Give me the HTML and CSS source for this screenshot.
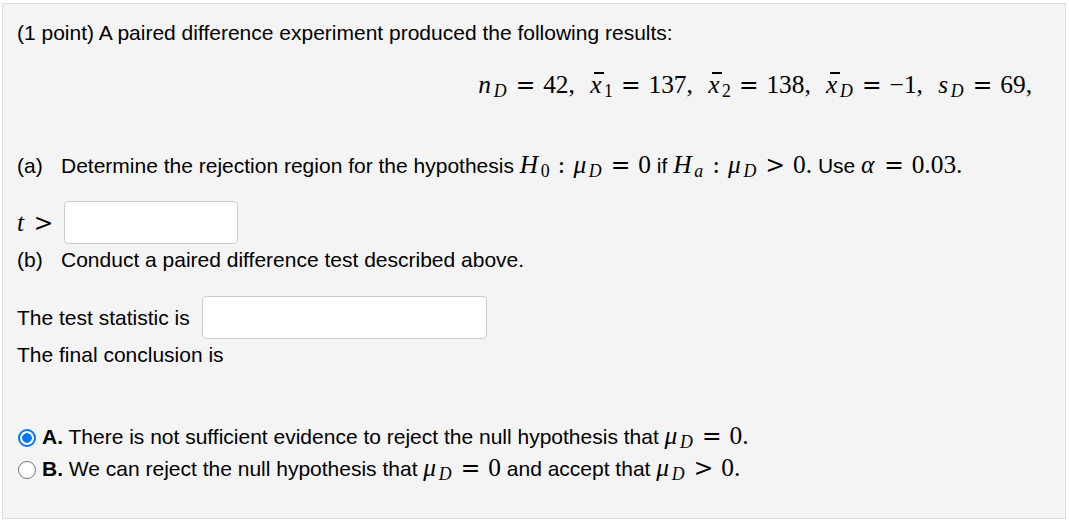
FILE: index.html
```html
<!DOCTYPE html>
<html>
<head>
<meta charset="utf-8">
<link rel="stylesheet" href="styles.css">
</head>
<body>
<div class="panel">
  <div class="intro">(1 point) A paired difference experiment produced the following results:</div>
  <div class="display">
    <span class="m"><i>n</i><sub><i>D</i></sub><span class="rel">=</span>42,<span class="sp"></span><i class="bar">x</i><sub>1</sub><span class="rel">=</span>137,<span class="sp"></span><i class="bar">x</i><sub>2</sub><span class="rel">=</span>138,<span class="sp"></span><i class="bar">x</i><sub><i>D</i></sub><span class="rel">=</span>−1,<span class="sp"></span><i>s</i><sub><i>D</i></sub><span class="rel">=</span>69,</span>
  </div>
  <div class="part part-a"><span class="label">(a)</span>Determine the rejection region for the hypothesis <span class="m"><i>H</i><sub>0</sub><span class="rel">:</span><i>μ</i><sub><i>D</i></sub><span class="rel">=</span>0</span> if <span class="m"><i>H</i><sub><i>a</i></sub><span class="rel">:</span><i>μ</i><sub><i>D</i></sub><span class="rel">&gt;</span>0.</span> Use <span class="m"><i>α</i><span class="rel">=</span>0.03.</span></div>
  <div class="row row-t"><span class="m tlabel"><i>t</i><span class="rel">&gt;</span></span><input class="ans ans-t" type="text"></div>
  <div class="part part-b"><span class="label">(b)</span>Conduct a paired difference test described above.</div>
  <div class="row row-stat"><span>The test statistic is</span><input class="ans ans-stat" type="text"></div>
  <div class="conclusion">The final conclusion is</div>
  <div class="choices">
    <div class="choice"><span class="radio checked"></span><b>A.</b> There is not sufficient evidence to reject the null hypothesis that <span class="m"><i>μ</i><sub><i>D</i></sub><span class="rel">=</span>0.</span></div>
    <div class="choice"><span class="radio"></span><b>B.</b> We can reject the null hypothesis that <span class="m"><i>μ</i><sub><i>D</i></sub><span class="rel">=</span>0</span> and accept that <span class="m"><i>μ</i><sub><i>D</i></sub><span class="rel">&gt;</span>0.</span></div>
  </div>
</div>
</body>
</html>
```
FILE: styles.css
```css
html, body {
  margin: 0;
  padding: 0;
  background: #ffffff;
}
body {
  font-family: "Liberation Sans", Arial, sans-serif;
  font-size: 21px;
  color: #000;
}
.panel {
  box-sizing: border-box;
  margin: 3px 3px 0 2px;
  height: 516px;
  border: 1px solid #dedede;
  background: #f4f4f4;
  padding: 0 14px 0 14px;
}
.intro {
  margin-top: 17px;
  line-height: 24px;
}
.display {
  margin-top: 24px;
  height: 30px;
  line-height: 30px;
  display: flex;
  justify-content: flex-end;
  padding-right: 19px;
}
.m {
  font-family: "Liberation Serif", "Times New Roman", serif;
  font-size: 1.21em;
  white-space: nowrap;
}
.m i {
  font-style: italic;
  padding-right: 0.07em;
}
.m sub {
  font-size: 0.7em;
  vertical-align: -0.25em;
  line-height: 0;
  padding-left: 0.05em;
}
.rel {
  font-family: "DejaVu Serif", serif;
  font-size: 0.92em;
  padding: 0 0.34em;
}
.sp {
  display: inline-block;
  width: 0.6em;
}
.bar {
  position: relative;
}
.bar::after {
  content: "";
  position: absolute;
  left: 0.14em;
  width: 0.42em;
  top: 0.08em;
  height: 1.5px;
  background: #000;
}
.part {
  line-height: 24px;
}
.label {
  display: inline-block;
  width: 44px;
}
.part-a {
  margin-top: 53px;
}
.row {
  display: flex;
  align-items: center;
  height: 43px;
}
.row-t {
  margin-top: 23px;
}
.tlabel {
  width: 47px;
  flex: none;
}
.ans {
  box-sizing: border-box;
  height: 43px;
  border: 1px solid #cccccc;
  border-radius: 4px;
  background: #ffffff;
  padding: 0 8px;
  font: inherit;
  outline: none;
}
.ans-t {
  width: 174px;
}
.ans-stat {
  width: 285px;
  margin-left: 12px;
}
.part-b {
  margin-top: 4px;
}
.row-stat {
  margin-top: 24px;
}
.conclusion {
  margin-top: 4px;
  line-height: 24px;
}
.choices {
  margin-top: 53px;
}
.choice {
  line-height: 31px;
  white-space: nowrap;
}
.radio {
  box-sizing: border-box;
  display: inline-block;
  vertical-align: -3px;
  width: 18px;
  height: 18px;
  border-radius: 50%;
  border: 1.5px solid #767676;
  background: #fff;
  margin: 0 6px 0 1px;
}
.radio.checked {
  border: 2px solid #0075ff;
  background: radial-gradient(circle, #0075ff 0 4.5px, #ffffff 5px);
}
```
